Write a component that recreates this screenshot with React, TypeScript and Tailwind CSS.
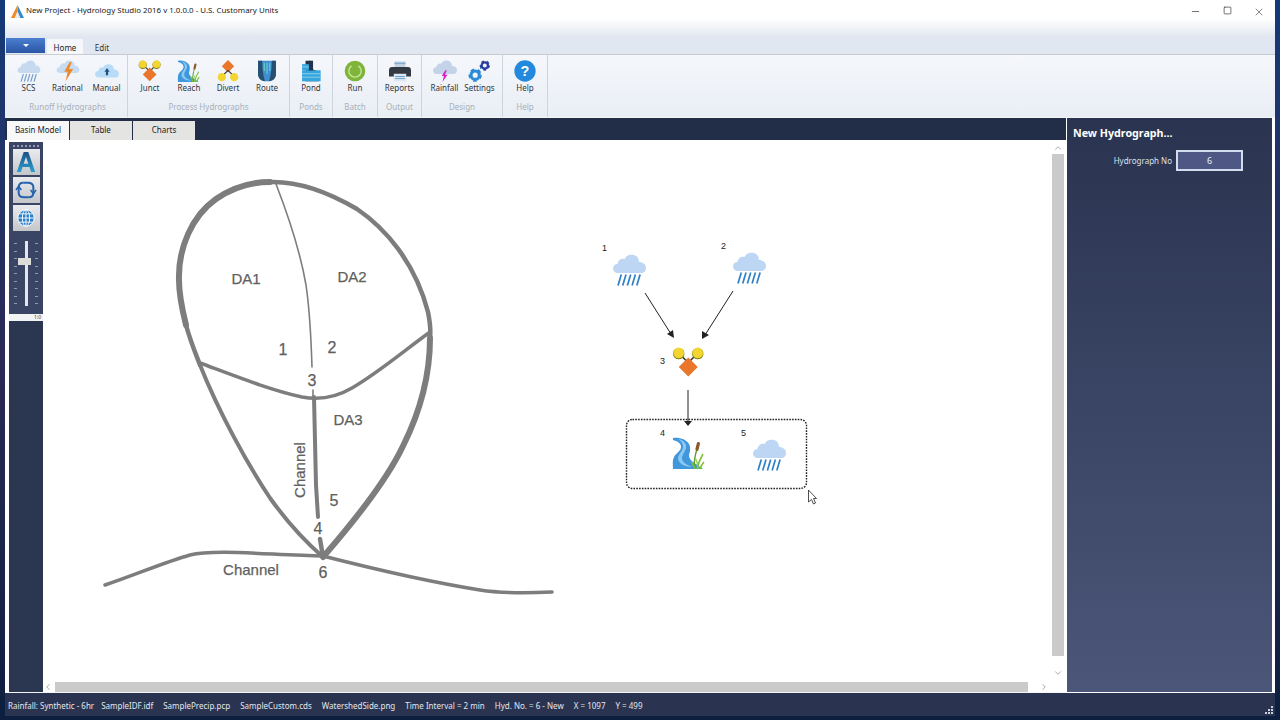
import React from 'react';
import { Minus, Square, X, ChevronUp, ChevronDown, ChevronLeft, ChevronRight } from 'lucide-react';

const UI_FONT = { fontFamily: '"Noto Sans", "Open Sans", sans-serif' };

/* ---------- ribbon & canvas icons ---------- */

const CLOUD = 'M5 19C2 19 0 17 0 14.5C0 12 2 10 4.5 10C5 6.5 8 4 11.5 5C13 1.5 17 0 21 1C24.5 2 26 5 26 8C30 8 33 10.5 33 14C33 17 31 19 28 19Z';

const Cloud = ({ fill = '#bcd6f3', rain = '#2f80c8' }: { fill?: string; rain?: string }) => (
  <>
    <path d={CLOUD} fill={fill} />
    {[5, 9.7, 14.4, 19.1, 23.8].map((x) => (
      <line key={x} x1={x + 3.3} y1={20.5} x2={x} y2={31.5} stroke={rain} strokeWidth={1.7} />
    ))}
  </>
);

const JunctGlyph = () => (
  <>
    <line x1="6" y1="7" x2="15" y2="16" stroke="#3a3a2a" strokeWidth="1.6" />
    <line x1="25" y1="7" x2="16" y2="16" stroke="#3a3a2a" strokeWidth="1.6" />
    <circle cx="5.5" cy="7" r="6" fill="#7f7a14" />
    <circle cx="25.5" cy="7" r="6" fill="#7f7a14" />
    <circle cx="5.5" cy="6.2" r="5.6" fill="#f2d52e" />
    <circle cx="25.5" cy="6.2" r="5.6" fill="#f2d52e" />
    <path d="M15.5 11L25.5 21L15.5 31L5.5 21Z" fill="#e9762b" />
  </>
);

const ReachGlyph = () => (
  <>
    <path d="M0 1C6 0 13 2 16 7C18 11 17 15 16 18C16 22 19 25 23 27L30 32H0C0 28 -1 24 1 20C3 16 8 14 8 10C8 6 4 4 0 3Z" fill="#3f97dc" />
    <path d="M5 2C11 3 14 7 13 11C12 15 9 18 9 21C9 25 13 28 20 30C12 30 6 27 5 22C5 17 10 14 10 10C10 6 8 4 5 2Z" fill="#8cc8f0" />
    <path d="M21 32C21 26 22 18 24 12" stroke="#5f9d30" strokeWidth="1.4" fill="none" />
    <path d="M24 32C25 27 27 22 30 17" stroke="#7cc238" strokeWidth="1.6" fill="none" />
    <path d="M22 32C21 29 20 27 18 25" stroke="#7cc238" strokeWidth="1.5" fill="none" />
    <path d="M27 32C28 29 29 27 31 25" stroke="#7cc238" strokeWidth="1.6" fill="none" />
    <path d="M25 32C25 27 24 24 22 20" stroke="#8fd048" strokeWidth="1.3" fill="none" />
    <rect x="23.2" y="5" width="3.2" height="9" rx="1.6" fill="#8a5a2b" transform="rotate(14 25 9)" />
  </>
);

const RibbonSvg = ({ children, box = '0 0 32 32' }: { children: React.ReactNode; box?: string }) => (
  <svg viewBox={box} className="h-[22px] w-[24px]">
    {children}
  </svg>
);

const IconScs = () => (
  <RibbonSvg box="0 0 33 32">
    <Cloud fill="#c6d9ee" rain="#6f9cc7" />
  </RibbonSvg>
);

const IconRational = () => (
  <RibbonSvg box="0 0 33 32">
    <path d={CLOUD} fill="#c6dcf2" />
    <path d="M19 3L11 17H16L13 31L24 13H18L22 3Z" fill="#ee8a2a" />
  </RibbonSvg>
);

const IconManual = () => (
  <RibbonSvg box="0 -3 33 26">
    <path d={CLOUD} fill="#b8dcf7" />
    <path d="M16.5 6L20 11H18V16H15V11H13Z" fill="#24507f" />
  </RibbonSvg>
);

const IconDivert = () => (
  <RibbonSvg>
    <path d="M16 0L25 9L16 18L7 9Z" fill="#e9762b" />
    <line x1="16" y1="15" x2="7" y2="24" stroke="#3a3a2a" strokeWidth="1.6" />
    <line x1="16" y1="15" x2="25" y2="24" stroke="#3a3a2a" strokeWidth="1.6" />
    <circle cx="7" cy="25" r="6" fill="#f2d52e" />
    <circle cx="25" cy="25" r="6" fill="#f2d52e" />
  </RibbonSvg>
);

const IconRoute = () => (
  <RibbonSvg>
    <path d="M3 1H29V20C29 27 24 31 16 31C8 31 3 27 3 20Z" fill="#3e8fd0" />
    <path d="M3 1H9C9 12 10 20 13 31C7 30 3 27 3 20Z" fill="#274f72" />
    <path d="M29 1H23C23 12 22 20 19 31C25 30 29 27 29 20Z" fill="#274f72" />
    <path d="M12 4V16M16 4V20M20 4V16" stroke="#6fd0c4" strokeWidth="1.6" />
  </RibbonSvg>
);

const IconPond = () => (
  <RibbonSvg>
    <path d="M8 1H15V12L27 17V31H8Z" fill="#20344f" />
    <rect x="3" y="15" width="27" height="16" fill="#34a5dd" />
    <path d="M3 20H30M3 25H30" stroke="#9ad6f2" strokeWidth="1.2" />
    <rect x="3" y="6" width="10" height="9" fill="#34a5dd" />
    <path d="M3 10H13" stroke="#9ad6f2" strokeWidth="1.2" />
    <path d="M13 1H19V15H13Z" fill="#20344f" />
  </RibbonSvg>
);

const IconRun = () => (
  <RibbonSvg>
    <circle cx="16" cy="16" r="15" fill="#7fb53a" />
    <path d="M11 8.5A9 9 0 1 0 21 8.5" fill="none" stroke="#c8e69a" strokeWidth="2" />
  </RibbonSvg>
);

const IconPrinter = () => (
  <RibbonSvg>
    <rect x="8" y="2" width="16" height="9" fill="#c5d4e4" />
    <rect x="8" y="4" width="16" height="2" fill="#7fa9cf" />
    <path d="M4 10H28C30 10 32 12 32 14V24H0V14C0 12 2 10 4 10Z" fill="#333a44" />
    <rect x="7" y="20" width="18" height="11" fill="#dfe8f2" />
    <path d="M9 24H23M9 27H23" stroke="#5f9fd0" strokeWidth="1.4" />
  </RibbonSvg>
);

const IconRainfall = () => (
  <RibbonSvg box="0 0 33 30">
    <path d={CLOUD} fill="#c3d3e8" />
    <path d="M17 14L12 22H15L13 30L20 20H16.5L19 14Z" fill="#d820c8" />
  </RibbonSvg>
);

const Gear = ({ cx, cy, r, color }: { cx: number; cy: number; r: number; color: string }) => (
  <>
    <circle cx={cx} cy={cy} r={r} fill="none" stroke={color} strokeWidth={r * 0.75} />
    <circle cx={cx} cy={cy} r={r * 1.35} fill="none" stroke={color} strokeWidth={r * 0.55} strokeDasharray={`${r * 0.85} ${r * 0.85}`} />
  </>
);

const IconSettings = () => (
  <RibbonSvg>
    <Gear cx={9} cy={22} r={6} color="#2c8bd8" />
    <Gear cx={23} cy={8} r={4.6} color="#2b3f9e" />
    <circle cx={17} cy={12} r={1.2} fill="#2c8bd8" />
  </RibbonSvg>
);

const IconHelp = () => (
  <RibbonSvg>
    <circle cx="16" cy="16" r="15.5" fill="#2389dd" />
    <text x="16" y="23" textAnchor="middle" fontSize="21" fontWeight="700" fill="#fff" fontFamily="Liberation Sans, sans-serif">
      ?
    </text>
  </RibbonSvg>
);

const IconJunct = () => (
  <RibbonSvg>
    <JunctGlyph />
  </RibbonSvg>
);

const IconReach = () => (
  <RibbonSvg>
    <ReachGlyph />
  </RibbonSvg>
);

/* ---------- ribbon data ---------- */

const GROUPS = [
  { label: 'Runoff Hydrographs', w: 'w-[120px]', iw: 'w-[39px]', items: [['SCS', IconScs], ['Rational', IconRational], ['Manual', IconManual]] },
  { label: 'Process Hydrographs', w: 'w-[162px]', iw: 'w-[39px]', items: [['Junct', IconJunct], ['Reach', IconReach], ['Divert', IconDivert], ['Route', IconRoute]] },
  { label: 'Ponds', w: 'w-[43px]', iw: 'w-[39px]', items: [['Pond', IconPond]] },
  { label: 'Batch', w: 'w-[45px]', iw: 'w-[39px]', items: [['Run', IconRun]] },
  { label: 'Output', w: 'w-[44px]', iw: 'w-[39px]', items: [['Reports', IconPrinter]] },
  { label: 'Design', w: 'w-[81px]', iw: 'w-[35px]', items: [['Rainfall', IconRainfall], ['Settings', IconSettings]] },
  { label: 'Help', w: 'w-[45px]', iw: 'w-[39px]', items: [['Help', IconHelp]] },
] as { label: string; w: string; iw: string; items: [string, React.FC][] }[];

const Ribbon = () => (
  <div className="flex h-[62px] items-stretch bg-gradient-to-b from-[#f5f7fb] to-[#e9eef5] pl-[3px]">
    {GROUPS.map((g) => (
      <div key={g.label} className={`${g.w} flex flex-col border-r border-[#cdd4de]`}>
        <div className="flex flex-1 justify-center">
          {g.items.map(([name, Icon]) => (
            <div key={name} className={`${g.iw} flex shrink-0 flex-col items-center pt-[5px]`}>
              <div className="flex h-[22px] items-center justify-center">
                <Icon />
              </div>
              <span className="-mt-[1px] whitespace-nowrap text-[8px] leading-[14px] text-[#30353c]">{name}</span>
            </div>
          ))}
        </div>
        <div className="mb-[4px] text-center text-[8px] leading-[12px] text-[#a8b0ba]">{g.label}</div>
      </div>
    ))}
  </div>
);

/* ---------- left tool strip ---------- */

const ToolButton = ({ children }: { children: React.ReactNode }) => (
  <div className="mb-[2px] flex h-[26px] w-[27px] items-center justify-center bg-gradient-to-b from-[#e9ebef] to-[#c4c6ca]">
    {children}
  </div>
);

const ToolStrip = () => (
  <div className="ml-[4px] mt-[2px] flex w-[34px] flex-col bg-[#2b3650]">
    <div className="flex flex-col items-center bg-[#3a4566] pt-[3px]">
      <div className="mb-[2px] h-[2px] w-[26px] border-t-2 border-dotted border-[#8f9ab0]" />
      <ToolButton>
        <svg viewBox="0 0 24 24" className="h-[22px] w-[22px]">
          <defs>
            <linearGradient id="tool-a" x1="0" y1="0" x2="0" y2="1">
              <stop offset="0" stopColor="#1d4f86" />
              <stop offset="1" stopColor="#2aa0d0" />
            </linearGradient>
          </defs>
          <path d="M9.5 1H14.5L22 23H17.5L15.8 17.5H8.2L6.5 23H2ZM12 6.5L9.4 14H14.6Z" fill="url(#tool-a)" />
        </svg>
      </ToolButton>
      <ToolButton>
        <svg viewBox="0 0 24 24" className="h-[22px] w-[22px]" fill="none" stroke="#2463ad" strokeWidth="2.2">
          <path d="M9 4H14C18 4 20 6 20 9V15C20 18 18 20 15 20" />
          <path d="M15 20H10C6 20 4 18 4 15V9C4 6 6 4 9 4" />
          <path d="M17 12L20 16L23 12M1 12L4 8L7 12" strokeWidth="1.6" />
        </svg>
      </ToolButton>
      <ToolButton>
        <svg viewBox="0 0 24 24" className="h-[22px] w-[22px]" fill="none" stroke="#fff" strokeWidth="1">
          <circle cx="12" cy="12" r="9" fill="#2a7fc9" />
          <ellipse cx="12" cy="12" rx="4" ry="9" />
          <path d="M12 3V21M3 12H21M4.5 7.5H19.5M4.5 16.5H19.5" />
        </svg>
      </ToolButton>
      <div className="relative mt-[8px] flex h-[65px] w-full justify-center">
        <div className="h-full w-[3px] bg-[#e4e6ea]" />
        <div className="absolute left-[9px] top-[17px] h-[7px] w-[13px] bg-[#dcdcd8]" />
        <div className="absolute left-[5px] top-0 flex h-full flex-col justify-between py-[2px]">
          {[0, 1, 2, 3, 4, 5, 6, 7, 8].map((i) => (
            <div key={i} className="h-px w-[3px] bg-[#8f9ab0]" />
          ))}
        </div>
        <div className="absolute right-[5px] top-0 flex h-full flex-col justify-between py-[2px]">
          {[0, 1, 2, 3, 4, 5, 6, 7, 8].map((i) => (
            <div key={i} className="h-px w-[3px] bg-[#8f9ab0]" />
          ))}
        </div>
      </div>
      <div className="mt-[8px] flex h-[7px] w-full items-center justify-end bg-[#f2f3f5] pr-[2px] text-[5px] leading-none text-[#444]">
        1:0
      </div>
    </div>
  </div>
);

/* ---------- canvas drawing, in page coordinates ---------- */

const Arrow = ({ x1, y1, x2, y2, head }: { x1: number; y1: number; x2: number; y2: number; head: string }) => (
  <>
    <line x1={x1} y1={y1} x2={x2} y2={y2} stroke="#222" strokeWidth={1} />
    <polygon points={head} fill="#222" />
  </>
);

const Watershed = () => (
  <g fill="none" stroke="#7d7d7d" strokeLinecap="round" strokeLinejoin="round">
    <path strokeWidth="6" d="M186 325C181 305 179 292 179 280C178 248 192 216 216 199C235 186 252 182 270 182" />
    <path strokeWidth="4.5" d="M200 365C195 352 190 340 186 325" />
    <path strokeWidth="4.5" d="M270 182C300 181 328 192 357 209C385 228 415 262 428 312C430 322 431 330 430 338" />
    <path strokeWidth="6" d="M430 338C430 375 420 412 403 446C386 482 350 526 323 557" />
    <path strokeWidth="4" d="M200 365C218 410 246 462 270 498C290 526 308 544 323 557" />
    <path strokeWidth="1.6" d="M276 184C288 215 300 250 306 285C310 312 311 335 312 367" />
    <path strokeWidth="3.5" d="M200 363C235 376 270 390 302 397C318 400 335 398 352 388C378 373 405 350 430 332" />
    <path strokeWidth="1.6" d="M313 390V398" />
    <path strokeWidth="4" d="M314 397L316 485L318 517" />
    <path strokeWidth="4.5" d="M320 539L323 557" />
    <path strokeWidth="3.5" d="M105 585C135 575 165 562 190 555C215 549 270 555 323 556C370 568 430 582 480 590C505 594 530 593 552 592" />
    <circle cx="323" cy="556" r="3" fill="#7d7d7d" stroke="none" />
    <g fill="#5f5f5f" stroke="#5f5f5f" strokeWidth="0.25" fontFamily="Liberation Sans, sans-serif">
      <text x="246" y="284" textAnchor="middle" fontSize="15">DA1</text>
      <text x="352" y="282" textAnchor="middle" fontSize="15">DA2</text>
      <text x="348" y="425" textAnchor="middle" fontSize="15">DA3</text>
      <text x="283" y="355" textAnchor="middle" fontSize="16">1</text>
      <text x="332" y="353" textAnchor="middle" fontSize="16">2</text>
      <text x="312" y="386" textAnchor="middle" fontSize="16">3</text>
      <text x="318" y="534" textAnchor="middle" fontSize="16">4</text>
      <text x="334" y="506" textAnchor="middle" fontSize="16">5</text>
      <text x="323" y="578" textAnchor="middle" fontSize="16">6</text>
      <text x="251" y="575" textAnchor="middle" fontSize="15">Channel</text>
      <text transform="translate(305 470) rotate(-90)" textAnchor="middle" fontSize="15">Channel</text>
    </g>
  </g>
);

const Network = () => (
  <>
    <g fontFamily="Liberation Sans, sans-serif" fontSize="9" fill="#222">
      <text x="602" y="251">1</text>
      <text x="721" y="249">2</text>
      <text x="660" y="364">3</text>
      <text x="660" y="436">4</text>
      <text x="741" y="436">5</text>
    </g>
    <g transform="translate(613 254)">
      <Cloud />
    </g>
    <g transform="translate(733 252)">
      <Cloud />
    </g>
    <g transform="translate(753 439)">
      <Cloud />
    </g>
    <g transform="translate(673.5 347) scale(0.95)">
      <JunctGlyph />
    </g>
    <g transform="translate(673 437)">
      <ReachGlyph />
    </g>
    <Arrow x1={645} y1={293} x2={671} y2={334} head="667,334 674,338 673,330" />
    <Arrow x1={733} y1={291} x2={705} y2={335} head="702,331 702,339 709,335" />
    <Arrow x1={688} y1={390} x2={688} y2={422} head="684,421 692,421 688,426" />
    <rect x="626.5" y="419.5" width="180" height="69" rx="6" fill="none" stroke="#222" strokeWidth="1.4" strokeDasharray="1.6 1.2" />
    <path d="M808.5 490V502L811.5 499.5L813.5 504L815.5 503L813.5 498.5H816.5Z" fill="#fff" stroke="#222" strokeWidth="0.8" />
  </>
);

/* ---------- app ---------- */

const TABS = ['Basin Model', 'Table', 'Charts'];
const STATUS = [
  'Rainfall: Synthetic - 6hr',
  'SampleIDF.idf',
  'SamplePrecip.pcp',
  'SampleCustom.cds',
  'WatershedSide.png',
  'Time Interval = 2 min',
  'Hyd. No. = 6 - New',
  'X = 1097',
  'Y = 499',
];

const App: React.FC = () => (
  <div
    className="flex h-[720px] w-[1280px] overflow-hidden bg-gradient-to-b from-[#123a78] via-[#2a2a55] to-[#0c1f3f] px-[5px]"
    style={UI_FONT}
  >
    <div className="flex h-[716px] w-[1270px] flex-col bg-[#f3f5f9]">
      {/* title bar */}
      <div className="flex h-[37px] flex-col bg-gradient-to-b from-white via-white to-[#e1e7f0]">
        <div className="flex h-[22px] items-center pl-[6px]">
          <svg viewBox="0 0 12 12" className="h-[13px] w-[13px]">
            <path d="M6 0L12 12H8.5L6 6Z" fill="#2f8bd0" />
            <path d="M6 0L0 12H3.5L6 6Z" fill="#f08a24" />
            <path d="M6 6L3.5 12H8.5Z" fill="#e8e8e8" />
          </svg>
          <span className="ml-[2px] whitespace-nowrap text-[7.9px] text-[#222]">
            New Project - Hydrology Studio 2016 v 1.0.0.0 - U.S. Customary Units
          </span>
          <div className="ml-auto flex pr-[1px] pt-[1px] text-[#333]">
            <div className="flex w-[32px] justify-center"><Minus size={11} strokeWidth={1.5} /></div>
            <div className="flex w-[32px] justify-center"><Square size={9} strokeWidth={1.8} /></div>
            <div className="flex w-[31px] justify-center"><X size={12} strokeWidth={1.2} /></div>
          </div>
        </div>
      </div>

      {/* ribbon tabs */}
      <div className="flex h-[18px] items-end border-b border-[#c6ccd6] bg-[#e1e7f0] pl-[1px]">
        <div className="mb-[1px] flex h-[15px] w-[39px] items-center justify-center bg-gradient-to-b from-[#4b7fd0] to-[#2b55a5]">
          <div className="h-0 w-0 border-x-[3px] border-t-[3px] border-x-transparent border-t-white" />
        </div>
        <div className="ml-[2px] flex h-[15px] w-[36px] items-center justify-center bg-[#f5f7fb] pt-[2px] text-[8px] text-[#222]">Home</div>
        <div className="flex h-[15px] w-[38px] items-center justify-center pt-[2px] text-[8px] text-[#333]">Edit</div>
      </div>

      <Ribbon />

      <div className="flex min-h-0 flex-1 pt-px">
        <div className="flex w-[1061px] flex-col">
          {/* document tabs */}
          <div className="flex h-[22px] items-end gap-px bg-[#222e47] pl-[2px]">
            {TABS.map((t, i) => (
              <div
                key={t}
                className={`flex h-[19px] w-[62px] items-center justify-center pb-[2px] text-[8px] text-[#222] ${i === 0 ? 'bg-[#f8f8f8]' : 'bg-[#e4e4e2]'}`}
              >
                {t}
              </div>
            ))}
          </div>

          <div className="flex h-[552px] bg-white">
            <ToolStrip />
            <div className="flex min-w-0 flex-1 flex-col">
              <div className="flex min-h-0 flex-1">
                <svg viewBox="43 140 1008 541" className="h-[541px] w-[1008px]">
                  <Watershed />
                  <Network />
                </svg>
                <div className="flex w-[14px] flex-col items-center text-[#999]">
                  <ChevronUp size={10} className="mt-[3px] shrink-0" />
                  <div className="mt-[1px] h-[502px] w-[12px] bg-[#cacaca]" />
                  <ChevronDown size={10} className="mt-[12px] shrink-0" />
                </div>
              </div>
              <div className="flex h-[11px] items-center text-[#999]">
                <ChevronLeft size={10} className="shrink-0" />
                <div className="ml-[2px] h-[10px] w-[973px] bg-[#cacaca]" />
                <ChevronRight size={10} className="ml-[11px] shrink-0" />
              </div>
            </div>
          </div>
        </div>

        {/* right panel */}
        <div className="flex w-[209px] bg-white pb-px pl-[1px] pr-[3px]">
          <div className="w-full bg-gradient-to-b from-[#2a3450] to-[#4b5679] px-[6px] pt-[8px]">
            <div className="text-[10.7px] font-bold leading-[14px] text-white">New Hydrograph...</div>
            <div className="mt-[10px] flex items-center">
              <div className="w-[99px] text-right text-[8px] text-[#dde2ea]">Hydrograph No</div>
              <div className="ml-[4px] flex h-[21px] w-[67px] items-center justify-center border-2 border-[#d3dcee] bg-[#4f5884] text-[9px] text-[#eef0f5]">
                6
              </div>
            </div>
          </div>
        </div>
      </div>

      {/* status bar */}
      <div className="relative flex h-[23px] shrink-0 items-center gap-[10px] bg-[#2a3450] pl-[3px] pt-[2px] text-[8px] text-[#e4e7ee]">
        {STATUS.map((s) => (
          <span key={s} className="whitespace-nowrap first:-mr-[3px]">
            {s}
          </span>
        ))}
        <svg viewBox="0 0 9 9" className="absolute bottom-[2px] right-[2px] h-[9px] w-[9px]" fill="#c9d0dd">
          <rect x="7" y="1" width="2" height="2" />
          <rect x="4" y="4" width="2" height="2" />
          <rect x="7" y="4" width="2" height="2" />
          <rect x="1" y="7" width="2" height="2" />
          <rect x="4" y="7" width="2" height="2" />
          <rect x="7" y="7" width="2" height="2" />
        </svg>
      </div>
    </div>
  </div>
);

export default App;
